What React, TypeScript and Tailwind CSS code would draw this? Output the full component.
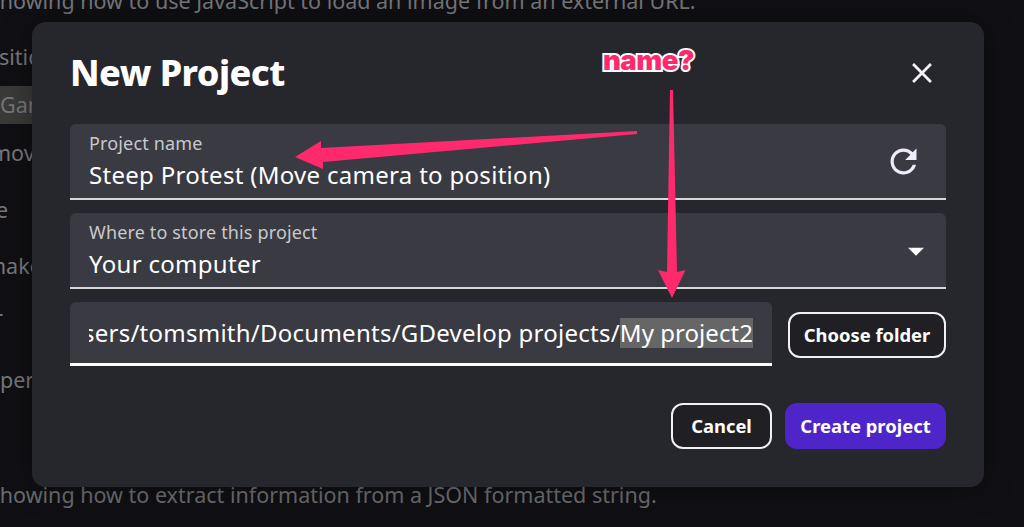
const font = "font-['Noto_Sans','Open_Sans',sans-serif]";

function OutlineButton({ label, className }: { label: string; className: string }) {
  return (
    <button
      className={`flex items-center justify-center rounded-[12px] border-2 border-[#f2f0f5] bg-[#1f1f24] pb-[1px] text-[18.4px] font-bold text-white ${className}`}
    >
      {label}
    </button>
  );
}

function Background() {
  return (
    <div className="h-[527px] w-[1024px] overflow-hidden bg-[#101014] text-[21.5px] leading-[30px] text-[#77777a]">
      <div className="mt-[-14px] ml-[-12px] whitespace-nowrap">
        Showing how to use JavaScript to load an image from an external URL.
      </div>
      <div className="mt-[26px] ml-[-27px] whitespace-nowrap">Position</div>
      <div className="mt-[14px] flex h-[38px] w-[40px] items-center bg-[#3a3a38] whitespace-nowrap">Game</div>
      <div className="mt-[14px] ml-[-9px] whitespace-nowrap">move</div>
      <div className="mt-[27px] ml-[-4px]">e</div>
      <div className="mt-[26px] ml-[-14px] whitespace-nowrap">make</div>
      <div className="mt-[22px] ml-[-6px]">r</div>
      <div className="mt-[32px] whitespace-nowrap">per</div>
      <div className="mt-[85px] ml-[-12px] whitespace-nowrap text-[#6b6b6e]">
        Showing how to extract information from a JSON formatted string.
      </div>
    </div>
  );
}

function Annotations() {
  return (
    <div className="pointer-events-none absolute inset-0">
      <svg width="1024" height="527" viewBox="0 0 1024 527" className="absolute inset-0">
        <polygon points="637,131 321,148 321,141 295,157 323,169 323,162 637,134" fill="#ff2a6d" />
        <polygon points="670,90 673,90 677,272 685.5,270 672,298 658,270 667,272" fill="#ff2a6d" />
      </svg>
      <span className="absolute top-[44px] left-[603px] font-['Inter',sans-serif] text-[27.5px] leading-[32px] font-black tracking-[-0.5px] text-[#ff2a6d] [-webkit-text-stroke:4px_white] [paint-order:stroke_fill]">
        name?
      </span>
    </div>
  );
}

export default function App() {
  return (
    <div className={`relative h-[527px] w-[1024px] overflow-hidden ${font}`}>
      <Background />
      <div className="absolute top-[22px] left-[32px] flex h-[465px] w-[952px] flex-col rounded-[14px] bg-[#26262d] px-[38px] shadow-[0_0_30px_rgba(0,0,0,0.35)]">
        <div className="flex h-[102px] items-center justify-between">
          <h1 className="text-[36px] leading-none font-extrabold tracking-[-0.55px] text-white">New Project</h1>
          <svg width="34" height="34" viewBox="0 0 24 24" fill="#f2f0f5" className="mr-[7px]">
            <path d="M19 6.41L17.59 5 12 10.59 6.41 5 5 6.41 10.59 12 5 17.59 6.41 19 12 13.41 17.59 19 19 17.59 13.41 12z" />
          </svg>
        </div>

        <div className="flex h-[76px] items-center justify-between rounded-t-[6px] border-b-2 border-[#d8d8d8] bg-[#3a3a42] pr-[23px] pl-[19px]">
          <div>
            <div className="text-[18px] leading-[23px] tracking-[0.15px] text-[#c9c9cc]">Project name</div>
            <div className="pt-[4px] text-[24px] leading-[32px] tracking-[0.3px] text-white">
              Steep Protest (Move camera to position)
            </div>
          </div>
          <svg width="39" height="39" viewBox="0 0 24 24" fill="#f0ebfa">
            <path d="M17.65 6.35C16.2 4.9 14.21 4 12 4c-4.42 0-7.99 3.58-7.99 8s3.57 8 7.99 8c3.73 0 6.84-2.55 7.73-6h-2.08c-.82 2.33-3.04 4-5.65 4-3.31 0-6-2.69-6-6s2.69-6 6-6c1.66 0 3.14.69 4.22 1.78L13 11h7V4l-2.35 2.35z" />
          </svg>
        </div>

        <div className="mt-[13px] flex h-[76px] items-center justify-between rounded-t-[6px] border-b-2 border-[#d8d8d8] bg-[#3a3a42] pr-[11px] pl-[19px]">
          <div>
            <div className="text-[18px] leading-[23px] tracking-[0.15px] text-[#c9c9cc]">Where to store this project</div>
            <div className="pt-[4px] text-[24px] leading-[32px] tracking-[0.3px] text-white">Your computer</div>
          </div>
          <svg width="38" height="38" viewBox="0 0 24 24" fill="white" className="mt-[1px]">
            <path d="M7 10l5 5 5-5z" />
          </svg>
        </div>

        <div className="mt-[13px] flex items-start justify-between">
          <div className="flex h-[64px] w-[702px] items-center rounded-t-[6px] border-b-[3px] border-white bg-[#3a3a42] px-[19px]">
            <div className="flex w-full justify-end overflow-hidden text-[24px] leading-[30px] tracking-[0.25px] whitespace-nowrap text-white">
              <span>/Users/tomsmith/Documents/GDevelop projects/</span>
              <span className="bg-[#666666] tracking-[0.05px]">My project2</span>
            </div>
          </div>
          <OutlineButton label="Choose folder" className="mt-[10px] h-[46px] w-[158px]" />
        </div>

        <div className="mt-[37px] flex justify-end gap-[13px]">
          <OutlineButton label="Cancel" className="h-[46px] w-[101px]" />
          <button className="flex h-[46px] w-[161px] items-center justify-center rounded-[12px] bg-[#4d25c9] pb-[1px] text-[18.4px] font-bold text-white">
            Create project
          </button>
        </div>
      </div>
      <Annotations />
    </div>
  );
}
